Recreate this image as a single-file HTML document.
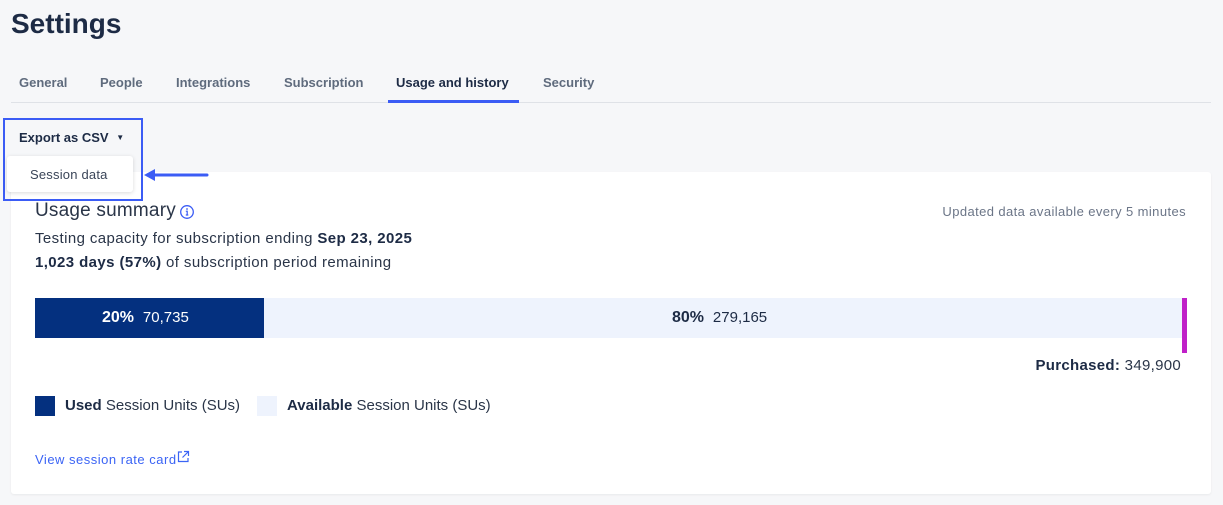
<!DOCTYPE html>
<html><head><style>
*{margin:0;padding:0;box-sizing:border-box}
body{width:1223px;height:505px;background:#f6f7f9;font-family:"Liberation Sans",sans-serif;color:#1d2b45;position:relative;overflow:hidden}
.a{position:absolute;white-space:nowrap}
.tab{position:absolute;top:75px;font-size:13px;font-weight:bold;color:#5f6b7d}
b{font-weight:bold}
</style></head><body>
<div class="a" style="left:11px;top:8px;font-size:28px;font-weight:bold">Settings</div>
<div class="tab" style="left:19px">General</div>
<div class="tab" style="left:100px">People</div>
<div class="tab" style="left:176px">Integrations</div>
<div class="tab" style="left:284px">Subscription</div>
<div class="tab" style="left:396px;color:#1d2b45">Usage and history</div>
<div class="tab" style="left:543px">Security</div>
<div class="a" style="left:11px;top:102px;width:1200px;height:1px;background:#dfe2e7"></div>
<div class="a" style="left:388px;top:100px;width:131px;height:3px;background:#3b5cf5"></div>

<div class="a" style="left:11px;top:172px;width:1200px;height:322px;background:#fff;border-radius:3px;box-shadow:0 1px 2px rgba(0,0,0,.06)"></div>

<div class="a" style="left:3px;top:118px;width:140px;height:83px;border:2px solid #3b5cf5"></div>
<div class="a" style="left:19px;top:130px;font-size:13px;font-weight:bold">Export as CSV <span style="font-size:8px;margin-left:4px;position:relative;top:-2px">▼</span></div>
<div class="a" style="left:7px;top:156px;width:126px;height:36px;background:#fff;border-radius:3px;box-shadow:0 1px 4px rgba(0,0,0,.15)"></div>
<div class="a" style="left:30px;top:167px;font-size:13px;color:#3a4558;letter-spacing:.2px">Session data</div>
<svg class="a" style="left:143px;top:168px" width="66" height="14"><line x1="8" y1="7" x2="64" y2="7" stroke="#3b5cf5" stroke-width="3" stroke-linecap="round"/><path d="M1 7 L12 1 L12 13 Z" fill="#3b5cf5"/></svg>

<div class="a" style="left:35px;top:200px;font-size:19px;color:#2a3548;letter-spacing:.2px">Usage summary</div>
<svg class="a" style="left:179px;top:204px" width="16" height="16"><circle cx="8" cy="8" r="6.3" fill="none" stroke="#3b5cf5" stroke-width="1.3"/><circle cx="8" cy="5" r="0.9" fill="#3b5cf5"/><path d="M6.8 7.2H8.2V11M6.8 11H9.3" stroke="#3b5cf5" stroke-width="1.2" fill="none"/></svg>
<div class="a" style="right:37px;top:204px;font-size:13px;color:#6b7587;letter-spacing:.4px">Updated data available every 5 minutes</div>
<div class="a" style="left:35px;top:230px;font-size:15px;color:#2a3548;letter-spacing:.4px">Testing capacity for subscription ending <b style="color:#1d2b45">Sep 23, 2025</b></div>
<div class="a" style="left:35px;top:254px;font-size:15px;color:#2a3548;letter-spacing:.4px"><b style="color:#1d2b45">1,023 days (57%)</b> of subscription period remaining</div>

<div class="a" style="left:35px;top:298px;width:1147px;height:40px;background:#eef3fd"></div>
<div class="a" style="left:35px;top:298px;width:229px;height:40px;background:#04307f"></div>
<div class="a" style="left:102px;top:309px;font-size:16px;color:#fff"><b>20%</b>&nbsp; <span style="font-size:15px">70,735</span></div>
<div class="a" style="left:672px;top:309px;font-size:16px;color:#1d2b45"><b>80%</b>&nbsp; <span style="font-size:15px">279,165</span></div>
<div class="a" style="left:1182px;top:298px;width:5px;height:55px;background:#c020c8"></div>
<div class="a" style="right:42px;top:357px;font-size:15px;color:#2a3548;letter-spacing:.3px"><b style="color:#1d2b45">Purchased:</b> 349,900</div>

<div class="a" style="left:35px;top:396px;width:20px;height:20px;background:#04307f"></div>
<div class="a" style="left:65px;top:397px;font-size:15px;color:#2a3548"><b style="color:#1d2b45">Used</b> Session Units (SUs)</div>
<div class="a" style="left:257px;top:396px;width:20px;height:20px;background:#eef3fd"></div>
<div class="a" style="left:287px;top:397px;font-size:15px;color:#2a3548"><b style="color:#1d2b45">Available</b> Session Units (SUs)</div>

<div class="a" style="left:35px;top:452px;font-size:13px;color:#3b64f5;letter-spacing:.5px">View session rate card</div>
<svg class="a" style="left:177px;top:450px" width="13" height="13"><path d="M5 2H1.5V11.5H11V8" fill="none" stroke="#3b64f5" stroke-width="1.2"/><path d="M7 1.5H11.5V6M11.5 1.5L5.5 7.5" fill="none" stroke="#3b64f5" stroke-width="1.2"/></svg>
</body></html>
